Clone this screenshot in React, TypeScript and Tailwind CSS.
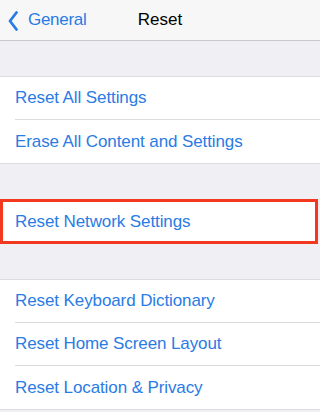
const groups: { items: string[]; highlight?: boolean }[] = [
  { items: ["Reset All Settings", "Erase All Content and Settings"] },
  { items: ["Reset Network Settings"], highlight: true },
  { items: ["Reset Keyboard Dictionary", "Reset Home Screen Layout", "Reset Location & Privacy"] },
];

export default function App() {
  return (
    <div
      className="w-[320px] h-[412px] overflow-hidden bg-[#efeff4] flex flex-col"
      style={{ fontFamily: '"Liberation Sans", Arial, sans-serif' }}
    >
      {/* Nav bar */}
      <div className="relative h-[41px] shrink-0 bg-[#f7f7f8] border-b border-[#c8c7cc] flex items-center">
        <div className="flex items-center pl-[8px] gap-[10px] text-[#2a7be4]">
          <svg width="10" height="20" viewBox="0 0 10 20" fill="none" className="mt-[1px]">
            <path d="M8.5 1.5 L2 10 L8.5 18.5" stroke="currentColor" strokeWidth="2.8" strokeLinecap="round" strokeLinejoin="round" />
          </svg>
          <span className="text-[17px] tracking-[-0.3px]">General</span>
        </div>
        <span className="absolute left-1/2 -translate-x-1/2 text-[17px] text-black">Reset</span>
      </div>

      {groups.map((g, gi) => (
        <div
          key={gi}
          className={
            g.highlight
              ? "mt-[35px] bg-white border-[3px] border-[#f2391f] mr-[2px] h-[45px] flex items-center"
              : "mt-[35px] bg-white border-y border-[#dcdce0]"
          }
        >
          {g.highlight ? (
            <span className="pl-[12px] text-[17px] tracking-[-0.1px] text-[#2a7be4]">{g.items[0]}</span>
          ) : (
            g.items.map((t, i) => (
              <div key={t} className="pl-[15px]">
                <div
                  className={
                    "h-[43px] flex items-center text-[17px] tracking-[-0.1px] text-[#2a7be4] " +
                    (i < g.items.length - 1 ? "border-b border-[#dcdce0]" : "")
                  }
                >
                  {t}
                </div>
              </div>
            ))
          )}
        </div>
      ))}
    </div>
  );
}
